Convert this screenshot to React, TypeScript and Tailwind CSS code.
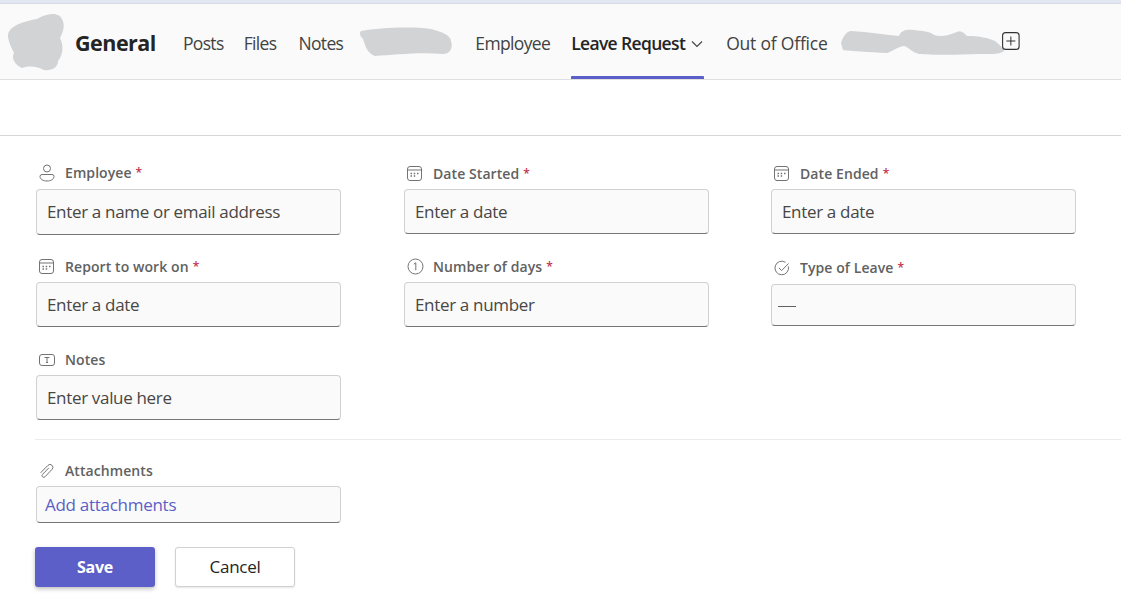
import React from 'react';

const font = "[font-family:'Open_Sans','Noto_Sans',sans-serif]";

const PersonIcon = () => (
  <svg width="16" height="18" viewBox="0 0 16 18" fill="none" stroke="#737373" strokeWidth="1">
    <circle cx="8" cy="4.500" r="3.500" />
    <path d="M3 10.500h10a2 2 0 0 1 2 2c0 2.800-3.200 4.500-7 4.500s-7-1.700-7-4.500a2 2 0 0 1 2-2z" />
  </svg>
);

const CalendarIcon = () => (
  <svg width="15" height="15" viewBox="0 0 15 15" fill="none" stroke="#737373" strokeWidth="1">
    <rect x="0.500" y="0.500" width="14" height="14" rx="2.500" />
    <path d="M0.500 4h14" />
    <path d="M3.500 7.500h1.500M6.700 7.500h1.500M10 7.500h1.500M3.500 10h1.500M6.700 10h1.500" strokeWidth="1.300" />
  </svg>
);

const NumberIcon = () => (
  <svg width="17" height="17" viewBox="0 0 17 17" fill="none" stroke="#737373" strokeWidth="1">
    <circle cx="8.500" cy="8.500" r="7.500" />
    <path d="M6.800 6.200 8.800 4.800v7.500" />
  </svg>
);

const CheckIcon = () => (
  <svg width="16" height="16" viewBox="0 0 16 16" fill="none" stroke="#737373" strokeWidth="1">
    <path d="M14.400 6.500A6.800 6.800 0 1 1 11.500 2.300" />
    <path d="M4.800 7.800 7.600 10.600 14.500 3.500" />
  </svg>
);

const TextIcon = () => (
  <svg width="16" height="12" viewBox="0 0 16 12" fill="none" stroke="#737373" strokeWidth="1">
    <rect x="0.500" y="0.500" width="15" height="11" rx="2.500" />
    <path d="M5.500 3.500h5M8 3.500v5M7 8.500h2" />
  </svg>
);

const ClipIcon = () => (
  <svg width="16" height="16" viewBox="0 0 16 16" fill="none" stroke="#737373" strokeWidth="1">
    <path d="M1.600 9.800 8.900 2.400a2.800 2.800 0 0 1 4.200 3.900L6 13.800a1.700 1.700 0 0 1-2.500-2.400L9.900 4.800" />
  </svg>
);

// hand-drawn grey marks hiding names in the original
const Blob = ({ w, h, d }: { w: number; h: number; d: string }) => (
  <svg width={w} height={h} viewBox={`0 0 ${w} ${h}`} className="shrink-0">
    <path d={d} fill="#d2d3d5" />
  </svg>
);

interface LabelProps {
  icon: React.ReactNode;
  label: string;
  required?: boolean;
}

const Label = ({ icon, label, required }: LabelProps) => (
  <div className="flex h-[17px] items-center">
    <span className="flex w-[29px] shrink-0 items-center pl-[3px]">{icon}</span>
    <span className="text-[14px] font-semibold tracking-[0.08px] text-[#616161]">{label}</span>
    {required && <span className="ml-[4px] text-[12px] font-semibold text-[#c4314b]">*</span>}
  </div>
);

const inputBox =
  'box-border flex w-[305px] items-center rounded-[4px] border border-[#d1d1d1] border-b-[#757575] bg-[#fafafa]';

const inputText = 'pl-[10px] text-[17px] tracking-[-0.33px] text-[#484644]';

const tabClass = 'text-[17.500px] tracking-[-0.65px] text-[#424242]';

export default function App() {
  return (
    <div className={`flex h-[612px] w-[1121px] flex-col overflow-hidden bg-white ${font}`}>
      <div className="h-[4px] shrink-0 border-b border-[#d5dbe5] bg-[#e2e8f1]" />

      {/* channel header */}
      <div className="relative flex h-[76px] shrink-0 items-center border-b border-[#e0e0e0] bg-[#fafafa] pl-[7px] pt-[4px]">
        <span className="-mt-[4px] flex">
          <Blob
            w={58}
            h={58}
            d="M1 24C0 15 12 9 30 6 38 1 51-2 55 6 59 14 55 20 53 25 57 33 56 42 51 48 51 55 44 58 37 57 30 54 25 52 15 55 8 52 4 45 7 40 4 34 2 30 1 24z"
          />
        </span>
        <span className="ml-[10px] text-[21.500px] font-bold tracking-[-0.5px] text-[#242424]">General</span>
        <span className={`ml-[27px] ${tabClass}`}>Posts</span>
        <span className={`ml-[20px] ${tabClass}`}>Files</span>
        <span className={`ml-[22px] ${tabClass}`}>Notes</span>
        <span className="-mt-[4px] ml-[16px] flex">
          <Blob
            w={94}
            h={30}
            d="M2 4C20 1 50-1 72 2 84 5 92 9 92 14 94 20 92 27 84 27 60 25 35 28 16 29 8 26 6 18 4 12 1 9 0 6 2 4z"
          />
        </span>
        <span className={`ml-[22px] ${tabClass}`}>Employee</span>
        <span className="relative ml-[21px] flex h-full w-[133px] items-center">
          <span className="text-[17.500px] font-semibold tracking-[-0.65px] text-[#242424]">Leave Request</span>
          <svg width="12" height="12" viewBox="0 0 12 12" fill="none" stroke="#424242" strokeWidth="1.100" className="ml-[6px]">
            <path d="M1 3.500 6 8.500 11 3.500" />
          </svg>
          <span className="absolute inset-x-0 bottom-0 h-[3px] rounded-t-[1px] bg-[#5b5fc7]" />
        </span>
        <span className="ml-[22px] text-[17.500px] tracking-[-0.2px] text-[#424242]">Out of Office</span>
        <span className="-mt-[4px] ml-[11px] flex">
          <Blob
            w={166}
            h={26}
            d="M2 14C4 7 8 2 12 2 30 3 48 6 60 7 62 1 68 0 75 1 85 2 92 3 95 6 102 8 108 7 118 3 122 1 125 4 128 7 140 7 150 9 156 12 160 15 164 19 165 22 160 26 150 25 140 25 120 26 90 26 80 25 72 23 70 18 65 17 58 18 54 22 48 24 30 23 12 22 4 21 1 18 2 14z"
          />
        </span>
        <svg width="18" height="18" viewBox="0 0 18 18" fill="none" stroke="#333333" className="-ml-[3px] mb-[6px] shrink-0">
          <rect x="0.600" y="0.600" width="16.500" height="16.800" rx="3" strokeWidth="1.100" />
          <path d="M8.850 4.500v9M4.350 9h9" strokeWidth="1" />
        </svg>
      </div>

      {/* empty command bar */}
      <div className="h-[56px] shrink-0 border-b border-[#d6d6d6]" />

      {/* form */}
      <div className="pt-[28px]">
        <div className="grid grid-cols-[368px_367px_305px] pl-[36px]">
          <div className="flex flex-col">
            <Label icon={<PersonIcon />} label="Employee" required />
            <div className={`${inputBox} ${inputText} mt-[8px] h-[46px]`}>Enter a name or email address</div>
            <div className="mt-[23px]">
              <Label icon={<CalendarIcon />} label="Report to work on" required />
            </div>
            <div className={`${inputBox} ${inputText} mt-[7px] h-[45px] pt-[1px]`}>Enter a date</div>
            <div className="mt-[24px]">
              <Label icon={<TextIcon />} label="Notes" />
            </div>
            <div className={`${inputBox} ${inputText} mt-[7px] h-[45px]`}>Enter value here</div>
          </div>
          <div className="flex flex-col pt-[1px]">
            <Label icon={<CalendarIcon />} label="Date Started" required />
            <div className={`${inputBox} ${inputText} mt-[7px] h-[45px]`}>Enter a date</div>
            <div className="mt-[24px]">
              <Label icon={<NumberIcon />} label="Number of days" required />
            </div>
            <div className={`${inputBox} ${inputText} mt-[7px] h-[45px] pt-[1px]`}>Enter a number</div>
          </div>
          <div className="flex flex-col pt-[1px]">
            <Label icon={<CalendarIcon />} label="Date Ended" required />
            <div className={`${inputBox} ${inputText} mt-[7px] h-[45px]`}>Enter a date</div>
            <div className="mt-[25px]">
              <Label icon={<CheckIcon />} label="Type of Leave" required />
            </div>
            <div className={`${inputBox} mt-[8px] h-[42px] pl-[6px]`}>
              <span className="mt-[2px] h-px w-[18px] bg-[#616161]" />
            </div>
          </div>
        </div>

        <div className="ml-[35px] mt-[19px] border-t border-[#ebebeb]" />

        <div className="pl-[36px] pt-[22px]">
          <Label icon={<ClipIcon />} label="Attachments" />
          <div className={`${inputBox} mt-[7px] h-[37px] pl-[8px] text-[17px] tracking-[-0.28px] text-[#5b5fc7]`}>
            Add attachments
          </div>
        </div>

        <div className="ml-[35px] mt-[24px] flex gap-[20px]">
          <button className="h-[40px] w-[120px] rounded-[3px] bg-[#5b5fc7] text-[16px] font-bold tracking-[-0.3px] text-white shadow-[0_2px_4px_rgba(0,0,0,0.25)]">
            Save
          </button>
          <button className="box-border h-[40px] w-[120px] rounded-[3px] border border-[#d1d1d1] bg-white text-[17px] font-medium tracking-[-0.3px] text-[#242424] shadow-[0_1px_2px_rgba(0,0,0,0.1)]">
            Cancel
          </button>
        </div>
      </div>
    </div>
  );
}
